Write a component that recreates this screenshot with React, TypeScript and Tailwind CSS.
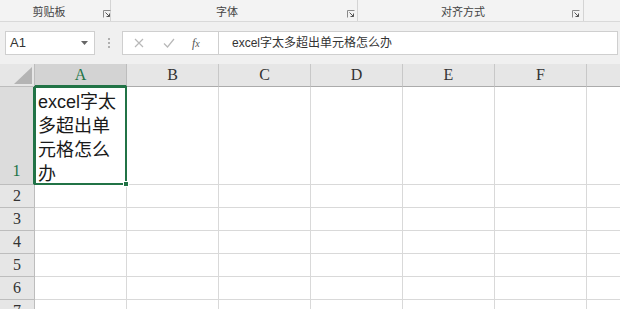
import React from "react";

const COLS = ["A", "B", "C", "D", "E", "F", ""];

function Launcher() {
  return (
    <svg width="8" height="8" viewBox="0 0 8 8" className="block">
      <path d="M0.5 7.5V0.5H7.5" fill="none" stroke="#8a8a8a" strokeWidth="1" />
      <path d="M2.5 2.5L6.5 6.5M6.5 3.5V6.5H3.5" fill="none" stroke="#555" strokeWidth="1" />
    </svg>
  );
}

export default function App() {
  const serif = { fontFamily: '"Liberation Serif", "DejaVu Serif", serif' };
  return (
    <div
      className="w-[620px] h-[309px] overflow-hidden bg-white flex flex-col"
      style={{ fontFamily: '"Liberation Sans", "Noto Sans CJK SC", sans-serif' }}
    >
      {/* ribbon group labels */}
      <div className="h-[22px] shrink-0 bg-[#f3f3f3] border-b border-[#d9d9d9] flex text-[11px] text-[#444]">
        <div className="w-[111px] shrink-0 flex items-center border-r border-[#d4d4d4] relative">
          <span className="w-[98px] text-center pt-[3px]">剪贴板</span>
          <span className="absolute left-[103px] top-[10px]"><Launcher /></span>
        </div>
        <div className="w-[247px] shrink-0 flex items-center border-r border-[#d4d4d4] relative">
          <span className="w-[232px] text-center pt-[3px]">字体</span>
          <span className="absolute left-[236px] top-[10px]"><Launcher /></span>
        </div>
        <div className="w-[226px] shrink-0 flex items-center border-r border-[#d4d4d4] relative">
          <span className="w-[210px] text-center pt-[3px]">对齐方式</span>
          <span className="absolute left-[214px] top-[10px]"><Launcher /></span>
        </div>
        <div className="flex-1" />
      </div>

      {/* formula bar */}
      <div className="h-[42px] shrink-0 bg-[#f0f0f0] flex items-start pt-[9px] pl-[5px]">
        <div className="w-[90px] h-[24px] bg-white border border-[#cfcfcf] flex items-center justify-between pl-[4px] pr-[6px] text-[13px] text-[#333]">
          <span>A1</span>
          <svg width="7" height="4" viewBox="0 0 7 4"><path d="M0 0H7L3.5 4Z" fill="#666" /></svg>
        </div>
        <div className="w-[27px] h-[24px] flex flex-col items-center justify-center gap-[2px]">
          <span className="w-[2px] h-[2px] bg-[#b0b0b0]" />
          <span className="w-[2px] h-[2px] bg-[#b0b0b0]" />
          <span className="w-[2px] h-[2px] bg-[#b0b0b0]" />
        </div>
        <div className="w-[96px] h-[24px] bg-white border border-[#cfcfcf] border-r-0 flex items-center">
          <svg width="10" height="10" viewBox="0 0 10 10" className="ml-[11px]">
            <path d="M1 1L9 9M9 1L1 9" stroke="#b8b8b8" strokeWidth="1.2" />
          </svg>
          <svg width="12" height="10" viewBox="0 0 12 10" className="ml-[19px]">
            <path d="M1 5.5L4.5 9L11 1" fill="none" stroke="#b8b8b8" strokeWidth="1.2" />
          </svg>
          <span className="ml-[17px] text-[12px] italic text-[#555]" style={serif}>
            f<span className="text-[10px]">x</span>
          </span>
        </div>
        <div className="w-[400px] h-[24px] bg-white border border-[#cfcfcf] flex items-center pl-[13px] text-[12px] text-[#333]">
          excel字太多超出单元格怎么办
        </div>
      </div>

      {/* grid */}
      <div className="flex-1 overflow-hidden">
        <div className="grid grid-cols-[35px_repeat(7,92px)] grid-rows-[23px_98px_repeat(6,23px)]">
          {/* corner */}
          <div className="bg-[#e6e6e6] border-r border-b border-[#bdbdbd] relative">
            <svg width="18" height="17" viewBox="0 0 18 17" className="absolute right-[2px] bottom-[2px]">
              <path d="M18 0V17H0Z" fill="#b4b4b4" />
            </svg>
          </div>
          {COLS.map((c, i) => (
            <div
              key={i}
              className={
                i === 0
                  ? "bg-[#d3d3d3] border-r border-b-2 border-b-[#217346] border-r-[#bdbdbd] flex items-center justify-center text-[16px] text-[#217346]"
                  : "bg-[#e6e6e6] border-r border-b border-r-[#c8c8c8] border-b-[#ababab] flex items-center justify-center text-[16px] text-[#333]"
              }
              style={serif}
            >
              {c}
            </div>
          ))}
          {[1, 2, 3, 4, 5, 6, 7].map((r) => (
            <React.Fragment key={r}>
              <div
                className={
                  r === 1
                    ? "bg-[#dcdcdc] border-r-2 border-r-[#217346] border-b border-b-[#bdbdbd] flex items-end justify-center pb-[1px] text-[16px] text-[#217346]"
                    : "bg-[#e6e6e6] border-r border-b border-[#bdbdbd] flex items-center justify-center text-[16px] text-[#333]"
                }
                style={serif}
              >
                {r}
              </div>
              {COLS.map((c, i) =>
                r === 1 && i === 0 ? (
                  <div
                    key={i}
                    className="relative border-2 border-[#217346] -ml-[1px] -mt-[1px] pl-[2px] pt-[2px] text-[18px] leading-[24px] text-[#1a1a1a] break-all"
                  >
                    excel字太多超出单元格怎么办
                    <span className="absolute -right-[4px] -bottom-[4px] w-[6px] h-[6px] bg-[#217346] border border-white" />
                  </div>
                ) : (
                  <div key={i} className="border-r border-b border-[#d9d9d9]" />
                )
              )}
            </React.Fragment>
          ))}
        </div>
      </div>
    </div>
  );
}
